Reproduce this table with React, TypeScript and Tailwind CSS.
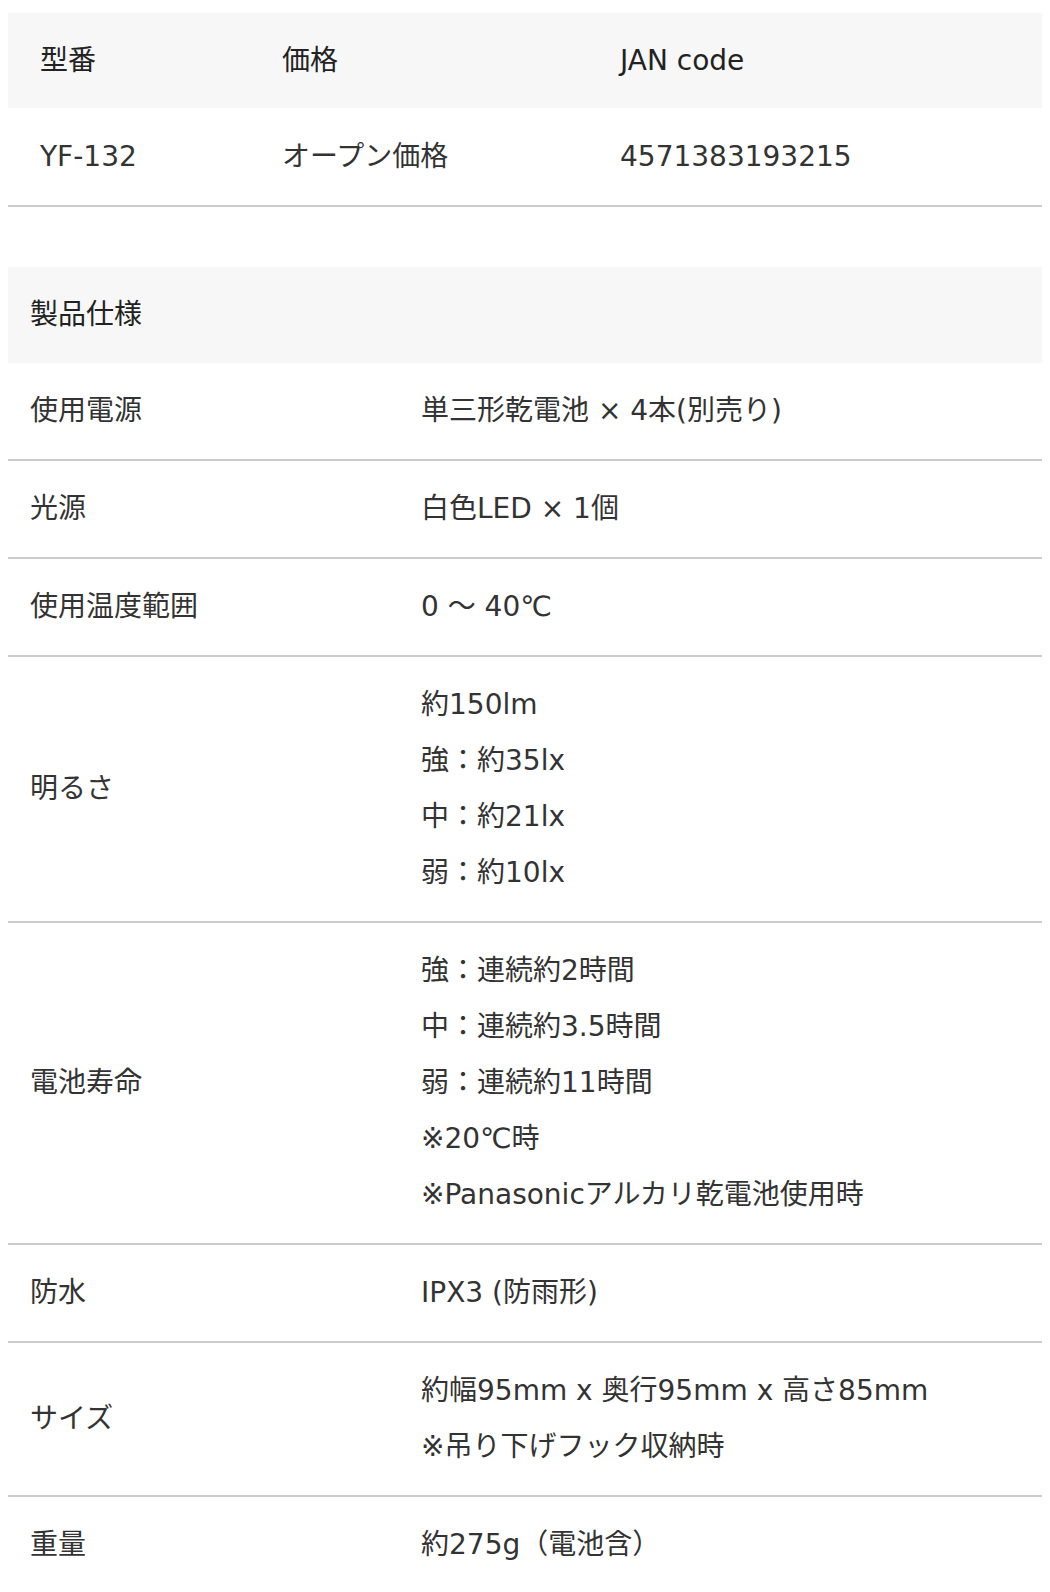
import React from 'react';

const font = { fontFamily: '"DejaVu Sans", "Noto Sans CJK JP", sans-serif' };

const specs: { label: string; lines: string[] }[] = [
  { label: '使用電源', lines: ['単三形乾電池 × 4本(別売り)'] },
  { label: '光源', lines: ['白色LED × 1個'] },
  { label: '使用温度範囲', lines: ['0 ～ 40℃'] },
  { label: '明るさ', lines: ['約150lm', '強：約35lx', '中：約21lx', '弱：約10lx'] },
  {
    label: '電池寿命',
    lines: ['強：連続約2時間', '中：連続約3.5時間', '弱：連続約11時間', '※20℃時', '※Panasonicアルカリ乾電池使用時'],
  },
  { label: '防水', lines: ['IPX3 (防雨形)'] },
  { label: 'サイズ', lines: ['約幅95mm x 奥行95mm x 高さ85mm', '※吊り下げフック収納時'] },
  { label: '重量', lines: ['約275g（電池含）'] },
];

const App = () => {
  return (
    <div className="min-h-screen bg-white px-2 pt-[13px] text-[28px] leading-[56px] text-[#333]" style={font}>
      {/* Model / price table */}
      <div className="grid grid-cols-[242px_338px_1fr] h-[95px] items-center bg-[#f7f7f7] text-[#222]">
        <div className="pl-8">型番</div>
        <div className="pl-8">価格</div>
        <div className="pl-8">JAN code</div>
      </div>
      <div className="grid grid-cols-[242px_338px_1fr] h-[99px] items-center border-b-2 border-[#cccccc]">
        <div className="pl-8">YF-132</div>
        <div className="pl-8">オープン価格</div>
        <div className="pl-8">4571383193215</div>
      </div>

      {/* Spec table */}
      <div className="mt-[60px]">
        <div className="flex h-[96px] items-center bg-[#f7f7f7] pl-[22px] text-[#222]">製品仕様</div>
        {specs.map((row, i) => (
          <div
            key={row.label}
            className={
              i === specs.length - 1
                ? 'flex items-center py-5'
                : 'flex items-center border-b-2 border-[#cccccc] py-5'
            }
          >
            <div className="w-[391px] shrink-0 pl-[22px]">{row.label}</div>
            <div className="pl-[22px]">
              {row.lines.map((line) => (
                <div key={line}>{line}</div>
              ))}
            </div>
          </div>
        ))}
      </div>
    </div>
  );
};

export default App;
